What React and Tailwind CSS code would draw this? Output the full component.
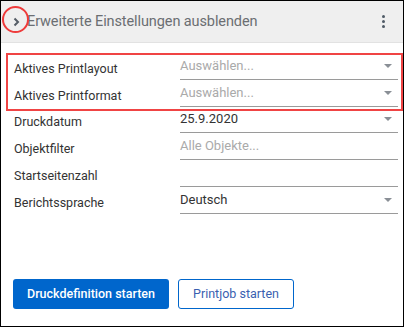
import React from "react";

const rows = [
  { label: "Aktives Printlayout", value: "Auswählen...", placeholder: true, arrow: true },
  { label: "Aktives Printformat", value: "Auswählen...", placeholder: true, arrow: true },
  { label: "Druckdatum", value: "25.9.2020", arrow: true },
  { label: "Objektfilter", value: "Alle Objekte...", placeholder: true },
  { label: "Startseitenzahl", value: "" },
  { label: "Berichtssprache", value: "Deutsch", arrow: true },
];

const Caret = () => (
  <svg width="8" height="4" viewBox="0 0 8 4" className="shrink-0">
    <path d="M0 0 H8 L4 4 Z" fill="#8a8f96" />
  </svg>
);

const Row = ({ label, value, placeholder, arrow }) => (
  <div className="flex h-[26.8px] items-end">
    <div className="w-[166px] pb-[3px] text-[12.5px] leading-[16px] text-[#333]">
      {label}
    </div>
    <div className="flex h-full w-[218px] items-end justify-between border-b border-[#9a9a9a] pb-[5px] pr-[6px]">
      <span
        className={`text-[13px] leading-[16px] ${
          placeholder ? "text-[#aaaaaa]" : "text-[#333]"
        }`}
      >
        {value}
      </span>
      {arrow && (
        <span className="mb-[6px]">
          <Caret />
        </span>
      )}
    </div>
  </div>
);

export default function App() {
  return (
    <div
      className="relative flex h-[327px] w-[404px] flex-col border border-black bg-white"
      style={{ fontFamily: "Roboto, 'Noto Sans', sans-serif" }}
    >
      {/* header */}
      <div className="flex h-[42px] items-center border-b border-[#e2e2e2] bg-[#efefef] pl-[12px] pr-[18px]">
        <svg width="14" height="10" viewBox="0 0 14 10" className="shrink-0">
          <path d="M1.5 1.5 L5 5 L1.5 8.5" fill="none" stroke="#555d66" strokeWidth="2" />
        </svg>
        <span className="flex-1 text-[14.5px] tracking-[-0.1px] text-[#6b6e72]">
          Erweiterte Einstellungen ausblenden
        </span>
        <div className="flex flex-col gap-[2px]">
          <span className="h-[3px] w-[3px] rounded-full bg-[#4f5a66]" />
          <span className="h-[3px] w-[3px] rounded-full bg-[#4f5a66]" />
          <span className="h-[3px] w-[3px] rounded-full bg-[#4f5a66]" />
        </div>
      </div>

      {/* fields */}
      <div className="pl-[13px] pt-[10px]">
        {rows.map((r) => (
          <Row key={r.label} {...r} />
        ))}
      </div>

      {/* actions */}
      <div className="mt-auto flex gap-[9px] pb-[17px] pl-[12px]">
        <button className="h-[30px] w-[156px] rounded-[3px] bg-[#0066cc] text-[12.5px] font-medium text-white">
          Druckdefinition starten
        </button>
        <button className="h-[30px] w-[116px] rounded-[3px] border border-[#0066cc] bg-white text-[12.5px] text-[#3a5fb0]">
          Printjob starten
        </button>
      </div>

      {/* annotations */}
      <div className="pointer-events-none absolute left-[1px] top-[5px] h-[27px] w-[27px] rounded-full border-2 border-[#ee3b3b]" />
      <div className="pointer-events-none absolute left-[5px] top-[52px] h-[58px] w-[397px] border-2 border-[#f04444]" />
    </div>
  );
}
